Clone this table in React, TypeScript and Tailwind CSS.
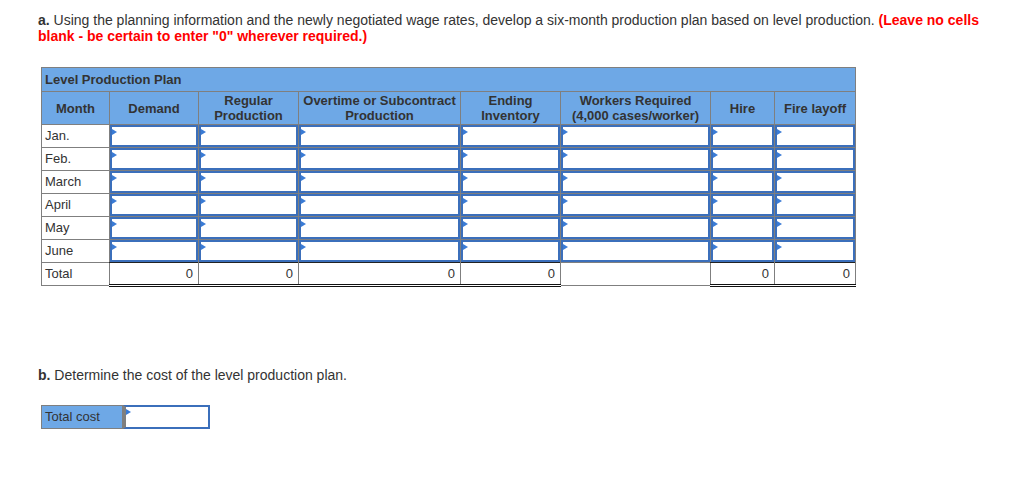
const months = ['Jan.', 'Feb.', 'March', 'April', 'May', 'June'];

const Cell = () => (
  <td className="border border-[#7f7f7f] p-0 h-[23px]">
    <div className="relative h-[22px] border-2 border-[#3b6fbb] bg-white">
      <span className="absolute left-0 top-[2px] w-0 h-0 border-y-[3px] border-y-transparent border-l-[5px] border-l-[#3a7bd5]" />
    </div>
  </td>
);

const App = () => {
  const headers = [
    ['Month'],
    ['Demand'],
    ['Regular', 'Production'],
    ['Overtime or Subcontract', 'Production'],
    ['Ending', 'Inventory'],
    ['Workers Required', '(4,000 cases/worker)'],
    ['Hire'],
    ['Fire layoff'],
  ];
  const widths = [68, 89, 100, 162, 100, 150, 64, 81];

  return (
    <div className="min-h-screen bg-white pl-[38px] pt-[12px] text-[13px] leading-[16px] text-[#333] font-['Liberation_Sans',Arial,sans-serif]">
      <p className="w-[950px] text-[14px] leading-[16px]">
        <b>a.</b> Using the planning information and the newly negotiated wage rates, develop a six-month production plan based on level production.{' '}
        <b className="text-[#ff0000]">(Leave no cells blank - be certain to enter "0" wherever required.)</b>
      </p>

      <table className="ml-[3px] mt-[23px] w-[815px] table-fixed border-collapse">
        <colgroup>
          {widths.map((w, i) => (
            <col key={i} style={{ width: w }} />
          ))}
        </colgroup>
        <thead>
          <tr>
            <th colSpan={8} className="h-[24px] border border-[#7f7f7f] bg-[#6ea8e6] px-[3px] text-left font-bold">
              Level Production Plan
            </th>
          </tr>
          <tr>
            {headers.map((h, i) => (
              <th key={i} className="h-[33px] border border-[#7f7f7f] bg-[#6ea8e6] px-1 text-center font-bold leading-[15px] whitespace-nowrap">
                {h.map((line, j) => (
                  <div key={j}>{line}</div>
                ))}
              </th>
            ))}
          </tr>
        </thead>
        <tbody>
          {months.map((m) => (
            <tr key={m}>
              <td className="border border-[#7f7f7f] h-[23px] px-[3px] py-0">{m}</td>
              {widths.slice(1).map((_, i) => (
                <Cell key={i} />
              ))}
            </tr>
          ))}
          <tr>
            <td className="border border-[#7f7f7f] h-[23px] px-[3px] py-0">Total</td>
            {[0, 0, 0, 0, null, 0, 0].map((v, i) =>
              v === null ? (
                <td key={i} className="border border-[#7f7f7f] h-[23px] p-0" />
              ) : (
                <td key={i} className="h-[23px] border-x border-x-[#7f7f7f] border-t border-t-[#222] border-b-[3px] border-b-[#111] border-double px-[5px] py-0 text-right">
                  {v}
                </td>
              )
            )}
          </tr>
        </tbody>
      </table>

      <p className="mt-[80px] text-[14px]">
        <b>b.</b> Determine the cost of the level production plan.
      </p>

      <div className="ml-[3px] mt-[22px] flex h-[24px]">
        <div className="w-[82px] border border-[#7f7f7f] bg-[#6ea8e6] px-[3px] leading-[22px]">Total cost</div>
        <div className="relative w-[87px] border-2 border-l-[3px] border-[#3b6fbb] border-l-[#7f7f7f] bg-white">
          <span className="absolute left-0 top-[2px] w-0 h-0 border-y-[3px] border-y-transparent border-l-[5px] border-l-[#3a7bd5]" />
        </div>
      </div>
    </div>
  );
};

export default App;
